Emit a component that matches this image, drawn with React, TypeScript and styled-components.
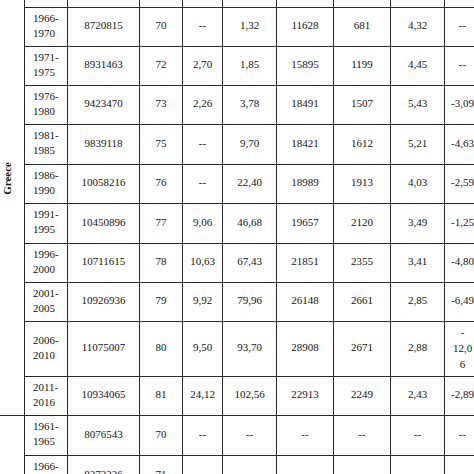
import styled, { createGlobalStyle } from 'styled-components';

type Row = { period: string; values: string[]; h: number };
type Group = { country: string; labelTop: number; rows: Row[] };

const groups: Group[] = [
  {
    country: 'Greece',
    labelTop: 193,
    rows: [
      { period: '', values: ['', '', '', '', '', '', '', ''], h: 38 },
      { period: '1966-\n1970', values: ['8720815', '70', '--', '1,32', '11628', '681', '4,32', '--'], h: 39 },
      { period: '1971-\n1975', values: ['8931463', '72', '2,70', '1,85', '15895', '1199', '4,45', '--'], h: 39 },
      { period: '1976-\n1980', values: ['9423470', '73', '2,26', '3,78', '18491', '1507', '5,43', '-3,09'], h: 39 },
      { period: '1981-\n1985', values: ['9839118', '75', '--', '9,70', '18421', '1612', '5,21', '-4,63'], h: 40 },
      { period: '1986-\n1990', values: ['10058216', '76', '--', '22,40', '18989', '1913', '4,03', '-2,59'], h: 39 },
      { period: '1991-\n1995', values: ['10450896', '77', '9,06', '46,68', '19657', '2120', '3,49', '-1,25'], h: 40 },
      { period: '1996-\n2000', values: ['10711615', '78', '10,63', '67,43', '21851', '2355', '3,41', '-4,80'], h: 39 },
      { period: '2001-\n2005', values: ['10926936', '79', '9,92', '79,96', '26148', '2661', '2,85', '-6,49'], h: 39 },
      { period: '2006-\n2010', values: ['11075007', '80', '9,50', '93,70', '28908', '2671', '2,88', '-\n12,0\n6'], h: 55 },
      { period: '2011-\n2016', values: ['10934065', '81', '24,12', '102,56', '22913', '2249', '2,43', '-2,89'], h: 39 },
    ],
  },
  {
    country: '',
    labelTop: 0,
    rows: [
      { period: '1961-\n1965', values: ['8076543', '70', '--', '--', '--', '--', '--', '--'], h: 39 },
      { period: '1966-\n1970', values: ['8273226', '71', '--', '--', '--', '--', '--', '--'], h: 40 },
    ],
  },
];

const App = () => (
  <>
    <GlobalStyle />
    <Page>
      <Table>
        {groups.map((group, gi) => (
          <GroupBlock key={gi}>
            <CountryCell $top={group.labelTop}>
              {group.country && <CountryLabel>{group.country}</CountryLabel>}
            </CountryCell>
            <Rows>
              {group.rows.map((row, ri) => (
                <DataRow key={ri} $h={row.h}>
                  <YearCell>{row.period}</YearCell>
                  {row.values.map((v, vi) => (
                    <Cell key={vi} $tall={v.includes('\n')}>
                      {v}
                    </Cell>
                  ))}
                </DataRow>
              ))}
            </Rows>
          </GroupBlock>
        ))}
      </Table>
    </Page>
  </>
);

export default App;

const GlobalStyle = createGlobalStyle`
  html, body {
    margin: 0;
    padding: 0;
    background: #fff;
  }
`;

const Page = styled.div`
  width: 474px;
  height: 474px;
  overflow: hidden;
  background: #fff;
  font-family: 'Liberation Serif', 'Times New Roman', serif;
  font-size: 11px;
  line-height: 15px;
  color: #151515;
`;

const Table = styled.div`
  margin-top: -32px;
  width: 480px;
`;

const GroupBlock = styled.div`
  display: flex;
  border-top: 1px solid #2a2a2a;
`;

const CountryCell = styled.div<{ $top: number }>`
  width: 24px;
  flex-shrink: 0;
  box-sizing: border-box;
  padding-top: ${(p) => p.$top}px;
`;

const CountryLabel = styled.div`
  writing-mode: vertical-rl;
  transform: rotate(180deg);
  font-weight: bold;
  line-height: 14px;
  width: 14px;
`;

const Rows = styled.div`
  display: flex;
  flex-direction: column;
  flex: 1;
`;

const DataRow = styled.div<{ $h: number }>`
  display: grid;
  grid-template-columns: 43px 72px 43px 40px 54px 57px 57px 54px 36px;
  height: ${(p) => p.$h}px;
  box-sizing: border-box;
  border-top: 1px solid #2a2a2a;

  &:first-child {
    border-top: none;
  }
`;

const Cell = styled.div<{ $tall?: boolean }>`
  display: flex;
  align-items: center;
  justify-content: center;
  text-align: center;
  white-space: pre-line;
  box-sizing: border-box;
  border-left: 1px solid #2a2a2a;
  padding: 0 2px 3px;
  line-height: ${(p) => (p.$tall ? '16px' : '15px')};
`;

const YearCell = styled(Cell)`
  justify-content: flex-start;
  text-align: left;
  padding-left: 8px;
`;
